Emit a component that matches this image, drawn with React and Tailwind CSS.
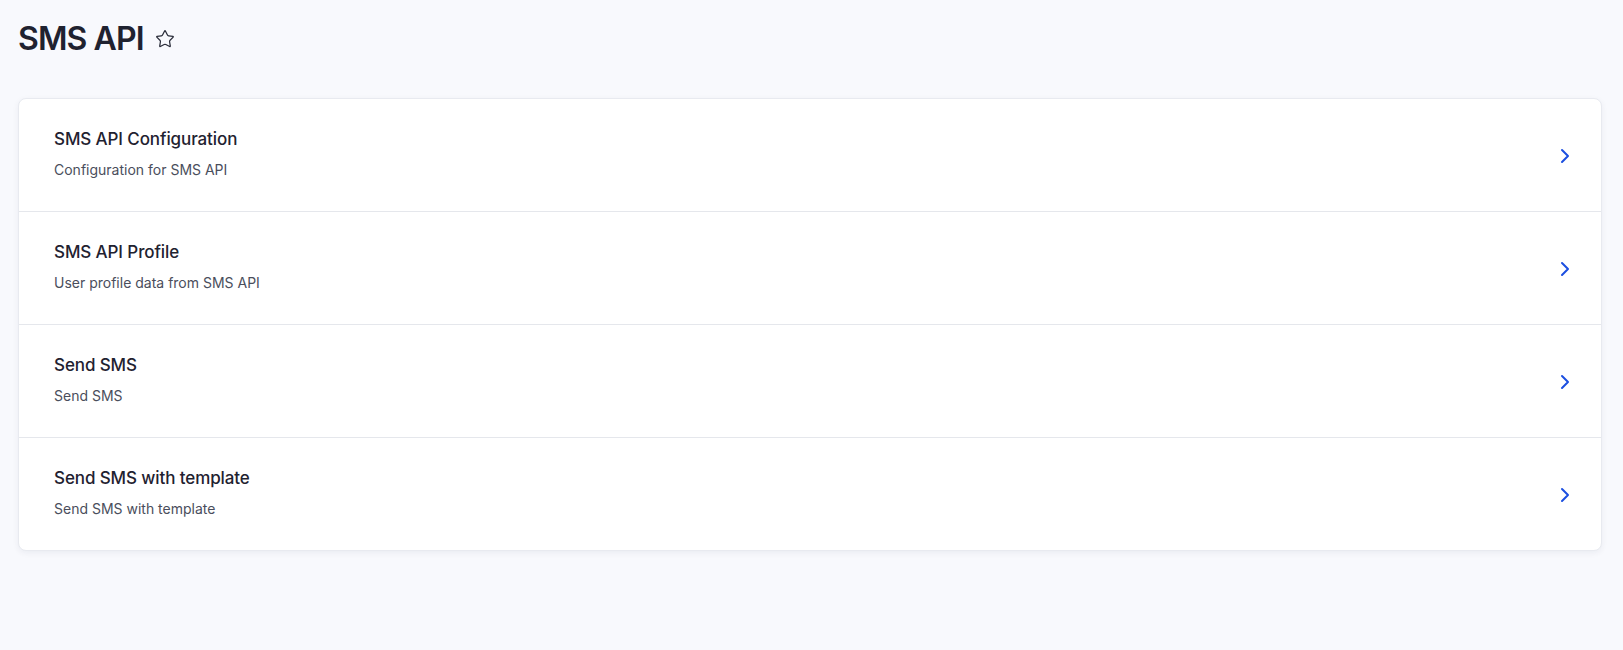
import React from 'react';
import { ChevronRight, Star } from 'lucide-react';

const items = [
  { title: 'SMS API Configuration', description: 'Configuration for SMS API' },
  { title: 'SMS API Profile', description: 'User profile data from SMS API' },
  { title: 'Send SMS', description: 'Send SMS' },
  { title: 'Send SMS with template', description: 'Send SMS with template' },
];

export default function App() {
  return (
    <div
      className="min-h-[650px] bg-[#f8f9fd] px-[18px] pt-[19px]"
      style={{ fontFamily: 'Inter, "Noto Sans", sans-serif' }}
    >
      <div className="flex items-center gap-[11px]">
        <h1 className="text-[32px] leading-[40px] font-semibold tracking-[-0.9px] text-[#1f2230]">SMS API</h1>
        <Star size={20} strokeWidth={1.5} className="text-[#2a2d3a]" />
      </div>

      <div className="mt-[39px] w-[1584px] rounded-lg border border-[#e8eaf0] bg-white shadow-[0_2px_6px_rgba(20,30,60,0.06)]">
        {items.map((item, i) => (
          <a
            key={item.title}
            href="#"
            className={`flex items-center justify-between pl-[35px] pr-6 pt-7 pb-[31px] ${
              i < items.length - 1 ? 'border-b border-[#e5e7ec]' : ''
            }`}
          >
            <div>
              <div className="text-[17px] leading-6 font-medium tracking-[-0.1px] text-[#1f2230]">{item.title}</div>
              <div className="mt-[9px] text-sm leading-5 text-[#4a4e5c]">{item.description}</div>
            </div>
            <ChevronRight size={24} strokeWidth={2} className="mt-1 text-[#1c4fe0]" />
          </a>
        ))}
      </div>
    </div>
  );
}
